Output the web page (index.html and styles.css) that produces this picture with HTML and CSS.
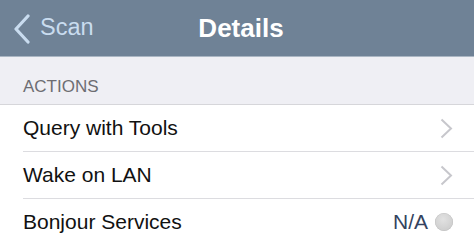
FILE: index.html
```html
<!DOCTYPE html>
<html>
<head>
<meta charset="utf-8">
<link rel="stylesheet" href="styles.css">
</head>
<body>
<div class="nav">
  <div class="back">
    <svg class="back-chevron" width="20" height="30" viewBox="0 0 20 30"><path d="M16 2 L4 15 L16 28" fill="none" stroke="#c9dcef" stroke-width="3.2" stroke-linecap="round" stroke-linejoin="round"/></svg>
    <span class="back-label">Scan</span>
  </div>
  <div class="title">Details</div>
  <div class="spacer"></div>
</div>
<div class="section-header">ACTIONS</div>
<div class="list">
  <div class="row">
    <span class="label">Query with Tools</span>
    <svg class="chevron" width="13" height="21" viewBox="0 0 13 21"><path d="M1.5 1.5 L11 10.5 L1.5 19.5" fill="none" stroke="#c7c7cc" stroke-width="2"/></svg>
  </div>
  <div class="row">
    <span class="label">Wake on LAN</span>
    <svg class="chevron" width="13" height="21" viewBox="0 0 13 21"><path d="M1.5 1.5 L11 10.5 L1.5 19.5" fill="none" stroke="#c7c7cc" stroke-width="2"/></svg>
  </div>
  <div class="row">
    <span class="label">Bonjour Services</span>
    <span class="detail">N/A<span class="dot"></span></span>
  </div>
</div>
</body>
</html>
```
FILE: styles.css
```css
html, body {
  margin: 0;
  padding: 0;
  background: #ffffff;
  font-family: "Liberation Sans", Arial, sans-serif;
}
body {
  width: 474px;
  height: 245px;
  overflow: hidden;
}
.nav {
  height: 56px;
  background: #6f8296;
  border-bottom: 1px solid #aab6c3;
  display: grid;
  grid-template-columns: 1fr auto 1fr;
  align-items: center;
}
.back {
  display: flex;
  align-items: center;
  padding-left: 12px;
  gap: 8px;
  color: #c9dcef;
}
.back-chevron {
  display: block;
  margin-top: 1px;
}
.back-label {
  font-size: 23.5px;
  line-height: 1;
}
.title {
  color: #ffffff;
  font-weight: bold;
  font-size: 26px;
  line-height: 1;
  padding-left: 8px;
}
.section-header {
  height: 48px;
  box-sizing: border-box;
  background: #efeff4;
  border-bottom: 1px solid #d6d6da;
  color: #6d6d72;
  font-size: 17px;
  padding: 21px 0 0 23px;
  line-height: 17px;
}
.list {
  background: #ffffff;
}
.row {
  height: 46px;
  margin-left: 23px;
  padding-right: 21px;
  display: flex;
  align-items: center;
  justify-content: space-between;
  border-bottom: 1px solid #dcdce0;
}
.row:last-child {
  border-bottom: none;
}
.label {
  font-size: 21px;
  color: #111111;
}
.chevron {
  display: block;
}
.detail {
  display: flex;
  align-items: center;
  gap: 7px;
  font-size: 21px;
  color: #34435f;
}
.dot {
  width: 18px;
  height: 18px;
  border-radius: 50%;
  background: radial-gradient(circle at 45% 35%, #e2e2e2, #cfcfcf 70%, #c4c4c4);
  box-shadow: inset 0 0 0 0.5px #c0c0c0;
}
```
